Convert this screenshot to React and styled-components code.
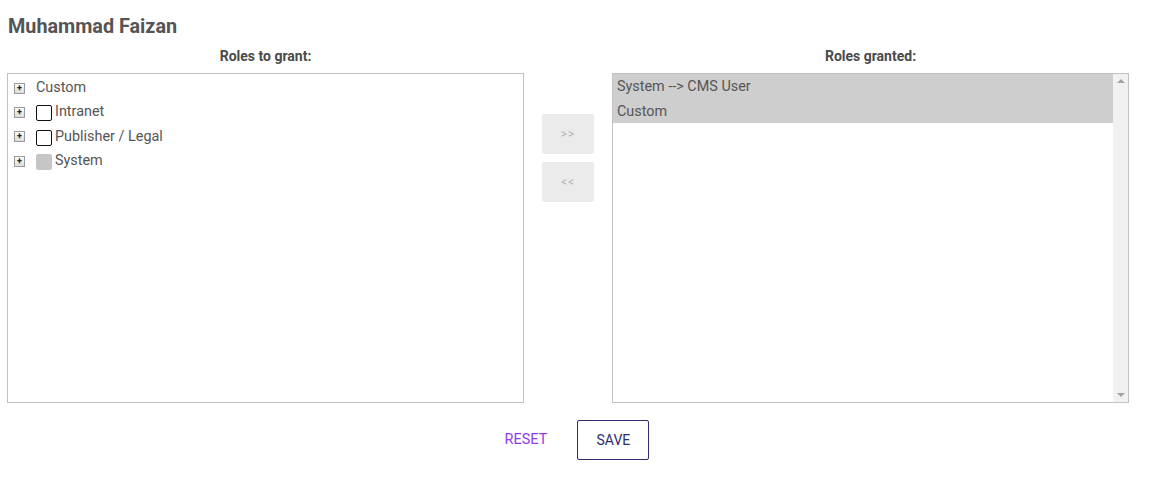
import React, { useState } from "react";
import styled, { createGlobalStyle } from "styled-components";

const GlobalStyle = createGlobalStyle`
  body {
    margin: 0;
    background: #ffffff;
    font-family: Roboto, "Liberation Sans", Arial, sans-serif;
    color: #555555;
  }
`;

const Page = styled.div`
  padding: 14px 7px 0 7px;
  width: 1122px;
`;

const UserName = styled.h2`
  margin: 0 0 0 1px;
  font-size: 19.8px;
  font-weight: 700;
  line-height: 26px;
  color: #545454;
`;

const Columns = styled.div`
  display: grid;
  grid-template-columns: 517px 88px 517px;
  margin-top: 8px;
`;

const Column = styled.div`
  display: flex;
  flex-direction: column;
`;

const ColumnTitle = styled.div`
  font-size: 14px;
  font-weight: 700;
  line-height: 16px;
  color: #4a4a4a;
  text-align: center;
  padding-bottom: 9px;
`;

const Panel = styled.div`
  height: 330px;
  box-sizing: border-box;
  border: 1px solid #c2c2c2;
  background: #fff;
  display: flex;
`;

const Tree = styled.ul`
  list-style: none;
  margin: 0;
  padding: 2px 0 0 6px;
`;

const TreeRow = styled.li`
  display: flex;
  align-items: center;
  height: 24.3px;
  font-size: 14.4px;
  color: #555;
  line-height: 24px;
`;

const Expander = styled.span`
  display: inline-flex;
  align-items: center;
  justify-content: center;
  width: 9px;
  height: 9px;
  border: 1px solid #9a9a9a;
  background: linear-gradient(#fafafa, #dcdcdc);
  margin-right: 11px;
  font-size: 9px;
  line-height: 9px;
  color: #222;
  font-weight: 700;
  flex-shrink: 0;
`;

const Check = styled.span`
  display: inline-block;
  width: 14px;
  height: 14px;
  border-radius: 2px;
  box-sizing: content-box;
  border: 1px solid ${(p) => (p.$disabled ? "#c6c6c6" : "#111")};
  background: ${(p) => (p.$disabled ? "#c6c6c6" : "#fff")};
  margin-right: 3px;
  margin-top: 2px;
  flex-shrink: 0;
`;

const Middle = styled.div`
  display: flex;
  flex-direction: column;
  align-items: center;
  gap: 8px;
  padding-top: 66px;
`;

const MoveButton = styled.button`
  width: 52px;
  height: 40px;
  border: none;
  border-radius: 2px;
  background: #ebebec;
  color: #b4b4b4;
  font-family: Roboto, "Liberation Sans", sans-serif;
  font-size: 12px;
  letter-spacing: 1px;
  cursor: default;
`;

const GrantedList = styled.ul`
  flex: 1;
  list-style: none;
  margin: 0;
  padding: 0;
`;

const GrantedItem = styled.li`
  height: 24.5px;
  line-height: 26px;
  padding-left: 4px;
  font-size: 14.4px;
  color: #555;
  background: ${(p) => (p.$selected ? "#cecece" : "transparent")};
`;

const ScrollTrack = styled.div`
  width: 15px;
  background: #f1f1f1;
  display: flex;
  flex-direction: column;
  justify-content: space-between;
  align-items: center;
  padding: 5px 0;
`;

const Arrow = styled.span`
  width: 0;
  height: 0;
  border-left: 4px solid transparent;
  border-right: 4px solid transparent;
  ${(p) =>
    p.$up
      ? "border-bottom: 4px solid #a3a3a3;"
      : "border-top: 4px solid #a3a3a3;"}
`;

const Actions = styled.div`
  display: flex;
  justify-content: center;
  align-items: center;
  gap: 30px;
  margin-top: 17px;
  padding-left: 18px;
`;

const ResetButton = styled.button`
  border: none;
  background: none;
  padding: 0;
  font-family: Roboto, "Liberation Sans", sans-serif;
  font-size: 14.5px;
  color: #8f3cf0;
  cursor: pointer;
  margin-top: -2px;
`;

const SaveButton = styled.button`
  width: 72px;
  height: 40px;
  border: 1px solid #2d2d6b;
  border-radius: 2px;
  background: #fff;
  font-family: Roboto, "Liberation Sans", sans-serif;
  font-size: 14px;
  color: #2d2d6b;
  cursor: pointer;
  padding-bottom: 2px;
`;

const rolesToGrant = [
  { label: "Custom", check: null },
  { label: "Intranet", check: "empty" },
  { label: "Publisher / Legal", check: "empty" },
  { label: "System", check: "disabled" },
];

const granted = ["System --> CMS User", "Custom"];

export default function App() {
  const [selected] = useState(granted);

  return (
    <>
      <GlobalStyle />
      <Page>
        <UserName>Muhammad Faizan</UserName>
        <Columns>
          <Column>
            <ColumnTitle>Roles to grant:</ColumnTitle>
            <Panel>
              <Tree>
                {rolesToGrant.map((r) => (
                  <TreeRow key={r.label}>
                    <Expander>+</Expander>
                    {r.check && <Check $disabled={r.check === "disabled"} />}
                    {r.label}
                  </TreeRow>
                ))}
              </Tree>
            </Panel>
          </Column>
          <Middle>
            <MoveButton>&gt;&gt;</MoveButton>
            <MoveButton>&lt;&lt;</MoveButton>
          </Middle>
          <Column>
            <ColumnTitle>Roles granted:</ColumnTitle>
            <Panel>
              <GrantedList>
                {granted.map((g) => (
                  <GrantedItem key={g} $selected={selected.includes(g)}>
                    {g}
                  </GrantedItem>
                ))}
              </GrantedList>
              <ScrollTrack>
                <Arrow $up />
                <Arrow />
              </ScrollTrack>
            </Panel>
          </Column>
        </Columns>
        <Actions>
          <ResetButton>RESET</ResetButton>
          <SaveButton>SAVE</SaveButton>
        </Actions>
      </Page>
    </>
  );
}
